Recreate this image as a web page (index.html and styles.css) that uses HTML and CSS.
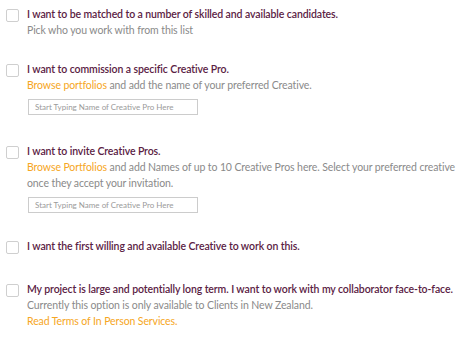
FILE: index.html
```html
<!DOCTYPE html>
<html>
<head>
<meta charset="utf-8">
<link rel="stylesheet" href="styles.css">
</head>
<body>
<div class="options">
  <div class="option">
    <span class="box"></span>
    <div class="content">
      <div class="title">I want to be matched to a number of skilled and available candidates.</div>
      <div class="desc">Pick who you work with from this list</div>
    </div>
  </div>
  <div class="option">
    <span class="box"></span>
    <div class="content">
      <div class="title">I want to commission a specific Creative Pro.</div>
      <div class="desc"><a class="link">Browse portfolios</a> and add the name of your preferred Creative.</div>
      <input class="field field-wide" type="text" placeholder="Start Typing Name of Creative Pro Here">
    </div>
  </div>
  <div class="option">
    <span class="box"></span>
    <div class="content">
      <div class="title">I want to invite Creative Pros.</div>
      <div class="desc"><a class="link">Browse Portfolios</a> and add Names of up to 10 Creative Pros here. Select your preferred creative once they accept your invitation.</div>
      <input class="field field-mid" type="text" placeholder="Start Typing Name of Creative Pro Here">
    </div>
  </div>
  <div class="option option-spaced">
    <span class="box"></span>
    <div class="content">
      <div class="title">I want the first willing and available Creative to work on this.</div>
    </div>
  </div>
  <div class="option">
    <span class="box"></span>
    <div class="content">
      <div class="title">My project is large and potentially long term. I want to work with my collaborator face-to-face.</div>
      <div class="desc">Currently this option is only available to Clients in New Zealand.</div>
      <div class="desc"><a class="link">Read Terms of In Person Services.</a></div>
    </div>
  </div>
</div>
</body>
</html>
```

FILE: styles.css
```css
html, body {
  margin: 0;
  padding: 0;
  background: #ffffff;
}
body {
  font-family: Lato, "Open Sans", sans-serif;
  font-size: 10.5px;
  letter-spacing: -0.1px;
  line-height: 16px;
}
.options {
  display: flex;
  flex-direction: column;
  gap: 23px;
  padding: 6px 0 0 6px;
}
.option {
  display: flex;
  align-items: flex-start;
  gap: 8px;
}
.option-spaced {
  margin-bottom: 4px;
}
.box {
  flex: none;
  width: 11px;
  height: 11px;
  margin-top: 3px;
  border: 1px solid #cfcfcf;
  border-radius: 2px;
  background: #fff;
}
.content {
  width: 434px;
}
.title {
  color: #5a2143;
  font-weight: 600;
}
.desc {
  color: #8a8a8a;
}
.link {
  color: #f6a623;
}
.field {
  display: block;
  box-sizing: border-box;
  width: 170px;
  height: 16px;
  margin: 6px 0 0 1px;
  padding: 0 6px;
  border: 1px solid #cccccc;
  border-radius: 0;
  font-family: Lato, sans-serif;
  font-size: 8px;
  letter-spacing: 0;
  color: #999;
  outline: none;
}
.field-wide {
  margin-bottom: 5px;
}
.field-mid {
  margin-bottom: 2px;
}
.field::placeholder {
  color: #9a9a9a;
}
```
